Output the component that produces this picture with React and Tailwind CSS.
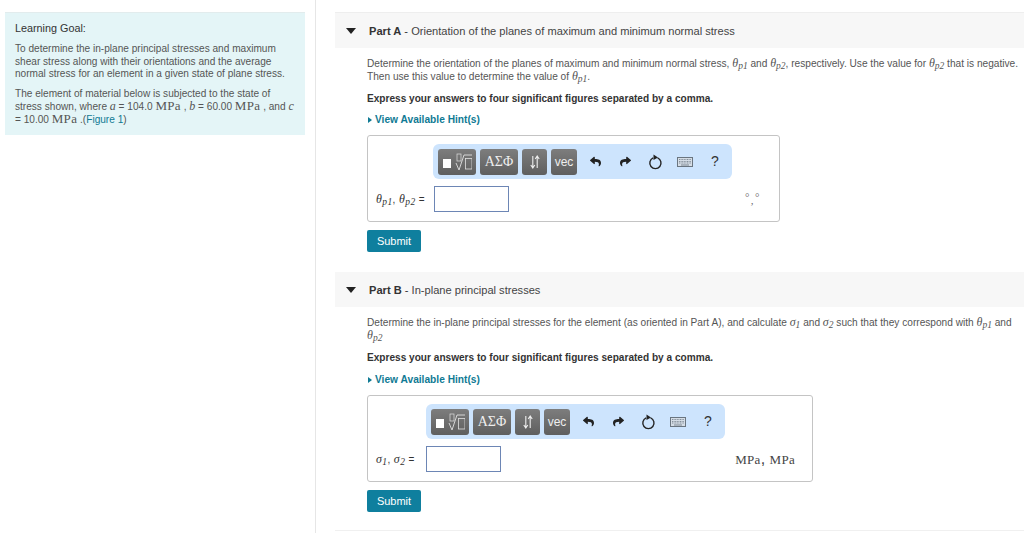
import { FaReply, FaShare } from 'react-icons/fa';

const serif = "font-['Liberation_Serif',serif]";

function Var({ v, sub }) {
  return (
    <span className={`${serif} text-[12px] leading-none whitespace-nowrap`}>
      <i>{v}</i>
      {sub && <sub className="text-[9.5px] italic leading-none">{sub}</sub>}
    </span>
  );
}

function Letter({ v }) {
  return <i className={`${serif} text-[12px] leading-none`}>{v}</i>;
}

function Mpa() {
  return <span className={`${serif} text-[13px] leading-[10px] tracking-[0.3px]`}>MPa</span>;
}

function TemplateIcon() {
  return (
    <svg width="30" height="22" viewBox="0 0 30 22" fill="none">
      <rect x="1" y="8" width="8" height="9" fill="#fff" />
      <rect x="15" y="3" width="4" height="7" stroke="#e0e0e0" strokeWidth="0.7" />
      <path d="M14 12 L17 19 L22 4 H30" stroke="#e0e0e0" strokeWidth="0.9" />
      <rect x="23.5" y="7.5" width="6.5" height="10.5" stroke="#e0e0e0" strokeWidth="0.8" />
    </svg>
  );
}

function ArrowsIcon() {
  return (
    <svg width="10" height="14" viewBox="0 0 10 14" fill="none" stroke="#eeeeee" strokeWidth="1.1">
      <path d="M2.8 1 V12.5 M0.8 10 L2.8 13 L4.8 10" />
      <path d="M7.2 13 V1.5 M5.2 4 L7.2 1 L9.2 4" />
    </svg>
  );
}

function ResetIcon() {
  return (
    <svg width="15" height="16" viewBox="0 0 15 16" fill="none">
      <path d="M5.2 3.9 A5.6 5.6 0 1 0 9.6 3.9" stroke="#222" strokeWidth="1.4" />
      <path d="M5.5 0.5 L10 3.4 L5.5 6 Z" fill="#222" />
    </svg>
  );
}

function KeyboardIcon() {
  return (
    <svg width="16" height="10" viewBox="0 0 16 10">
      <rect x="0.5" y="0.5" width="15" height="9" fill="#d5dde6" stroke="#6a7580" />
      <path d="M2 2.5 H14 M2 4.5 H14 M2 6 H14" stroke="#7c8792" strokeWidth="0.9" strokeDasharray="1 0.6" />
      <path d="M4 8 H12" stroke="#7c8792" />
    </svg>
  );
}

function ToolButton({ w, children }) {
  return (
    <div className={`${w} h-[26px] rounded-[3px] bg-gradient-to-b from-[#7d7d7d] to-[#5f5f5f] flex items-center justify-center text-[#eeeeee]`}>
      {children}
    </div>
  );
}

function Toolbar({ left }) {
  return (
    <div className={`${left} w-[299px] h-[35px] rounded-[6px] bg-[#cde4fd] flex items-center pl-[5px]`}>
      <div className="flex gap-[4px]">
        <ToolButton w="w-[38px]"><TemplateIcon /></ToolButton>
        <ToolButton w="w-[38px]">
          <span className={`${serif} text-[14px]`}>ΑΣΦ</span>
        </ToolButton>
        <ToolButton w="w-[25px]"><ArrowsIcon /></ToolButton>
        <ToolButton w="w-[26px]"><span className="text-[12px]">vec</span></ToolButton>
      </div>
      <div className="flex items-center text-[#222]">
        <span className="w-[30px] ml-[3px] flex justify-center"><FaReply size={11} /></span>
        <span className="w-[30px] flex justify-center"><FaShare size={11} /></span>
        <span className="w-[30px] flex justify-center"><ResetIcon /></span>
        <span className="w-[30px] flex justify-center"><KeyboardIcon /></span>
        <span className="w-[30px] flex justify-center text-[14px] text-[#333]">?</span>
      </div>
    </div>
  );
}

function Answer({ boxW, toolbarLeft, labelW, label, units, unitsPr }) {
  return (
    <div className={`${boxW} h-[87px] border border-[#c4c4c4] rounded-[3px] pl-[8px] pt-[8px]`}>
      <Toolbar left={toolbarLeft} />
      <div className="flex items-center mt-[7px]">
        <div className={`${labelW} text-[#333] text-[10px] tracking-[0.4px] whitespace-nowrap`}>{label}</div>
        <div className="w-[75px] h-[26px] border border-[#6d86b5]" />
        <div className={`flex-1 text-right ${unitsPr} text-[#444]`}>{units}</div>
      </div>
    </div>
  );
}

function Part({ name, title, intro, answer, bodyH, expressMt, hintMt }) {
  return (
    <section>
      <div className="h-[35px] bg-[#f7f7f7] flex items-center">
        <svg width="10" height="6" viewBox="0 0 10 6" className="ml-[11px] mr-[13px]">
          <path d="M0 0 H10 L5 6 Z" fill="#222" />
        </svg>
        <span className="text-[11.1px] text-[#333] translate-y-[1px]">
          <b>{name}</b> - <span className="text-[#444]">{title}</span>
        </span>
      </div>
      <div className={`${bodyH} pl-[32px]`}>
        <div className="pt-[9px] text-[10.15px] leading-[13px] text-[#555] whitespace-nowrap">{intro}</div>
        <p className={`${expressMt} text-[10.1px] leading-[13px] font-bold text-[#333]`}>
          Express your answers to four significant figures separated by a comma.
        </p>
        <div className={`${hintMt} flex items-center text-[10.2px] leading-[13px] font-bold text-[#0f7a94]`}>
          <svg width="4" height="6" viewBox="0 0 4 6" className="ml-[1px] mr-[3px]">
            <path d="M0 0 L4 3 L0 6 Z" fill="#0f7a94" />
          </svg>
          View Available Hint(s)
        </div>
        <div className="mt-[9px]">{answer}</div>
        <button className="mt-[8px] w-[54px] h-[22px] bg-[#0f7f9e] rounded-[2px] text-white text-[11px]">Submit</button>
      </div>
    </section>
  );
}

export default function App() {
  return (
    <div className="flex h-[533px] overflow-hidden bg-white font-['Liberation_Sans',sans-serif]">
      <aside className="w-[316px] shrink-0 border-r border-[#e6e6e6] pl-[5px] pt-[12px]">
        <div className="w-[300px] h-[123px] bg-[#e4f5f7] border-t border-[#e2eced] pl-[10px] pt-[9px] text-[10.1px] leading-[12.5px] text-[#555]">
          <h3 className="text-[10.8px] leading-[13px] font-medium text-[#333]">Learning Goal:</h3>
          <p className="mt-[8px]">
            To determine the in-plane principal stresses and maximum<br />
            shear stress along with their orientations and the average<br />
            normal stress for an element in a given state of plane stress.
          </p>
          <p className="mt-[7px]">
            The element of material below is subjected to the state of<br />
            stress shown, where <Letter v="a" /> = 104.0 <Mpa /> , <Letter v="b" /> = 60.00 <Mpa /> , and <Letter v="c" /><br />
            = 10.00 <Mpa /> .(<span className="text-[#0f7a94]">Figure 1</span>)
          </p>
        </div>
      </aside>
      <main className="flex-1 min-w-0 pl-[19px] pt-[12px]">
        <div className="border-t border-[#eeeeee]">
          <Part
            name="Part A"
            title="Orientation of the planes of maximum and minimum normal stress"
            bodyH="h-[224px]"
            expressMt="mt-[9px]"
            hintMt="mt-[8px]"
            intro={
              <>
                Determine the orientation of the planes of maximum and minimum normal stress, <Var v="θ" sub="p1" /> and <Var v="θ" sub="p2" />, respectively. Use the value for <Var v="θ" sub="p2" /> that is negative.<br />
                Then use this value to determine the value of <Var v="θ" sub="p1" />.
              </>
            }
            answer={
              <Answer
                boxW="w-[413px]"
                toolbarLeft="ml-[57px]"
                labelW="w-[58px]"
                label={<><Var v="θ" sub="p1" />, <Var v="θ" sub="p2" /> =</>}
                units={
                  <span className={`${serif} text-[11px] tracking-[1.5px] text-[#666]`}>
                    <span className="relative -top-[3px]">°</span>,<span className="relative -top-[3px]">°</span>
                  </span>
                }
                unitsPr="pr-[18px]"
              />
            }
          />
          <Part
            name="Part B"
            title="In-plane principal stresses"
            bodyH="h-[224px] border-b border-[#f0f0f0]"
            expressMt="mt-[9px]"
            hintMt="mt-[9px]"
            intro={
              <>
                Determine the in-plane principal stresses for the element (as oriented in Part A), and calculate <Var v="σ" sub="1" /> and <Var v="σ" sub="2" /> such that they correspond with <Var v="θ" sub="p1" /> and<br />
                <Var v="θ" sub="p2" />
              </>
            }
            answer={
              <Answer
                boxW="w-[446px]"
                toolbarLeft="ml-[50px]"
                labelW="w-[50px]"
                label={<><Var v="σ" sub="1" />, <Var v="σ" sub="2" /> =</>}
                units={<><Mpa />, <Mpa /></>}
                unitsPr="pr-[17px]"
              />
            }
          />
        </div>
      </main>
    </div>
  );
}
